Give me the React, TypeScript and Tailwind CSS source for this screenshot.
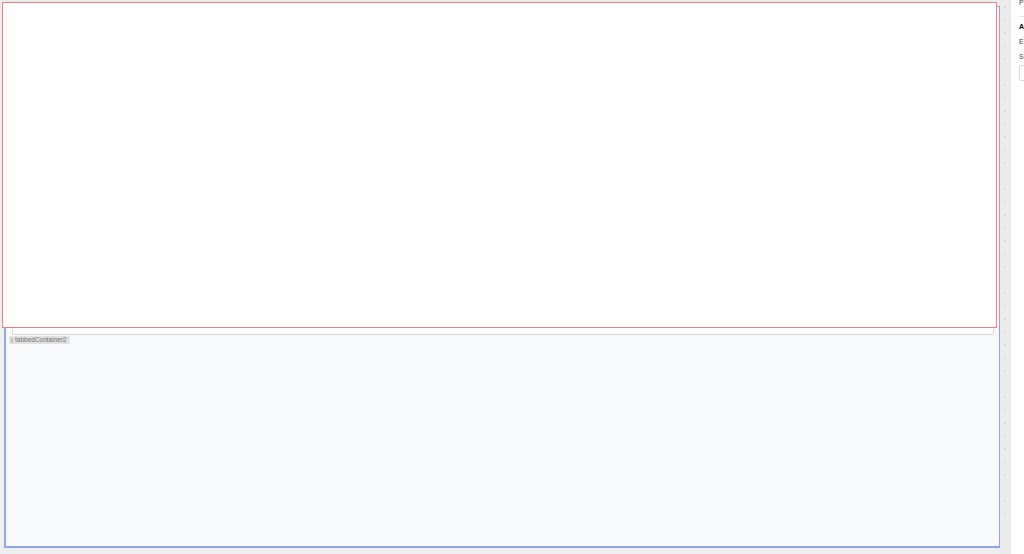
export default function App() {
  const dots = Array.from({ length: 40 });

  return (
    <div className="flex h-[554px] w-[1024px] overflow-hidden bg-[#eeeeee] font-['Liberation_Sans',sans-serif]">
      {/* canvas */}
      <div className="relative h-full w-[1000px] pl-[4px] pt-[6px]">
        <div className="flex h-[542px] w-[996px] flex-col border border-b-2 border-l-2 border-[#8ea6f2] bg-[#f8f9fb]">
          <div className="ml-[6px] mr-[5px] h-[328px] rounded-br-[3px] border border-t-0 border-[#dcdcdc] bg-white" />
          <div className="ml-[3px] mt-[1px] flex h-[8px] w-fit items-center gap-[2px] rounded-[1px] bg-[#e2e2e2] pl-[2px] pr-[3px]">
            <span className="h-[5px] w-[2px] border-l border-r border-[#c0c0c0]" />
            <span className="whitespace-nowrap text-[6.5px] leading-none text-[#6f6f6f]">tabbedContainer2</span>
          </div>
        </div>
        {/* selection overlay */}
        <div className="absolute left-[2px] top-[2px] h-[326px] w-[995px] border border-[#f07f86] bg-white" />
      </div>

      {/* gutter */}
      <div className="flex h-full w-[11px] flex-col items-center gap-[11px] bg-[#ebebeb] pt-[6px]">
        {dots.map((_, i) => (
          <span key={i} className="h-[2px] w-[2px] shrink-0 bg-[#dcdcdc]" />
        ))}
      </div>

      {/* properties panel */}
      <div className="flex h-full flex-1 flex-col bg-white pl-[8px] text-[7px] leading-none text-[#444]">
        <div className="-mt-[1px] h-[18px] border-b border-[#e5e5e5]">P</div>
        <div className="mt-[6px] font-bold text-black">A</div>
        <div className="mt-[8px]">E</div>
        <div className="mt-[8px]">S</div>
        <div className="mt-[5px] h-[16px] w-full rounded-l-[2px] border border-r-0 border-[#dcdcdc]" />
      </div>
    </div>
  );
}
